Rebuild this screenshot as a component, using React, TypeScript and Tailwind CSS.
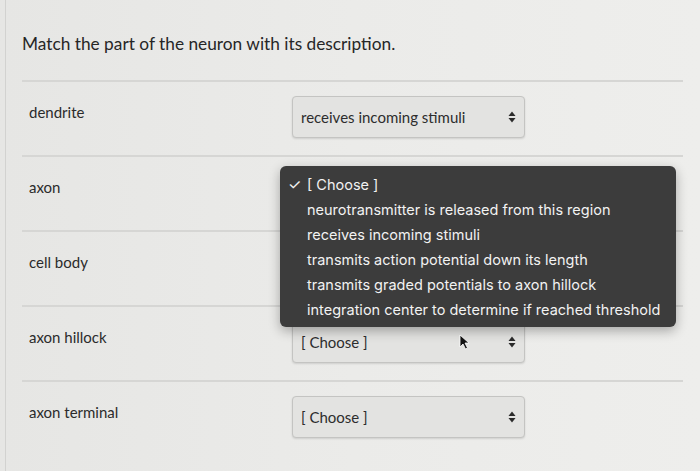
import { ReactNode } from 'react'

const ROWS = [
  { part: 'dendrite', value: 'receives incoming stimuli' },
  { part: 'axon', value: '' },
  { part: 'cell body', value: '' },
  { part: 'axon hillock', value: '[ Choose ]' },
  { part: 'axon terminal', value: '[ Choose ]' },
]

const OPTIONS = [
  'neurotransmitter is released from this region',
  'receives incoming stimuli',
  'transmits action potential down its length',
  'transmits graded potentials to axon hillock',
  'integration center to determine if reached threshold',
]

function Arrows() {
  return (
    <svg width="8" height="12" viewBox="0 0 8 12" className="text-[#2a2a2a]">
      <path d="M4 0.5 L7.5 5 L0.5 5 Z" fill="currentColor" />
      <path d="M4 11.5 L7.5 7 L0.5 7 Z" fill="currentColor" />
    </svg>
  )
}

function Select({ children }: { children: ReactNode }) {
  return (
    <div className="w-[233px] h-[42px] rounded-[4px] border border-[#c4c4c2] bg-[#e3e3e1] shadow-[0_1px_2px_rgba(0,0,0,0.12)] flex items-center justify-between pl-[8px] pr-[8px]">
      <span className="text-[15px] text-[#2d2d2d]">{children}</span>
      <Arrows />
    </div>
  )
}

export default function App() {
  return (
    <div className="relative w-[700px] h-[471px] overflow-hidden bg-gradient-to-r from-[#e6e6e4] via-[#ebebe9] to-[#eeeeec] font-['Lato','Open_Sans',sans-serif] text-[#2b2b2b]">
      <div className="absolute left-[5px] top-0 bottom-0 w-px bg-[#d2d2d0]" />
      <div className="pl-[22px] pr-[17px]">
        <h1 className="pt-[31px] h-[80px] text-[17.3px] text-[#262626]">Match the part of the neuron with its description.</h1>
        {ROWS.map((r) => (
          <div key={r.part} className="h-[75px] border-t-2 border-[#d6d6d4] flex items-start">
            <div className="w-[270px] pl-[7px] pt-[20px] text-[15px] leading-[20px]">{r.part}</div>
            {r.value && (
              <div className="mt-[14px]">
                <Select>{r.value}</Select>
              </div>
            )}
          </div>
        ))}
      </div>

      <div className="absolute left-[280px] top-[166px] w-[396px] h-[161px] rounded-[6px] bg-[#3c3c3c] shadow-[0_4px_12px_rgba(0,0,0,0.3)] pt-[6px] font-['Inter',sans-serif] text-[14.5px] leading-[25px] text-[#f2f2f2]">
        <div className="flex">
          <span className="w-[27px] pl-[8px] text-[15px]">✓</span>
          <span>[ Choose ]</span>
        </div>
        {OPTIONS.map((o) => (
          <div key={o} className="pl-[27px]">{o}</div>
        ))}
      </div>

      <svg className="absolute left-[459px] top-[334px]" width="12" height="16" viewBox="0 0 12 16">
        <path d="M1 1 L1 13 L4 10 L6.5 15 L8.5 14 L6 9 L10 9 Z" fill="#111" stroke="#fff" strokeWidth="0.8" />
      </svg>
    </div>
  )
}
